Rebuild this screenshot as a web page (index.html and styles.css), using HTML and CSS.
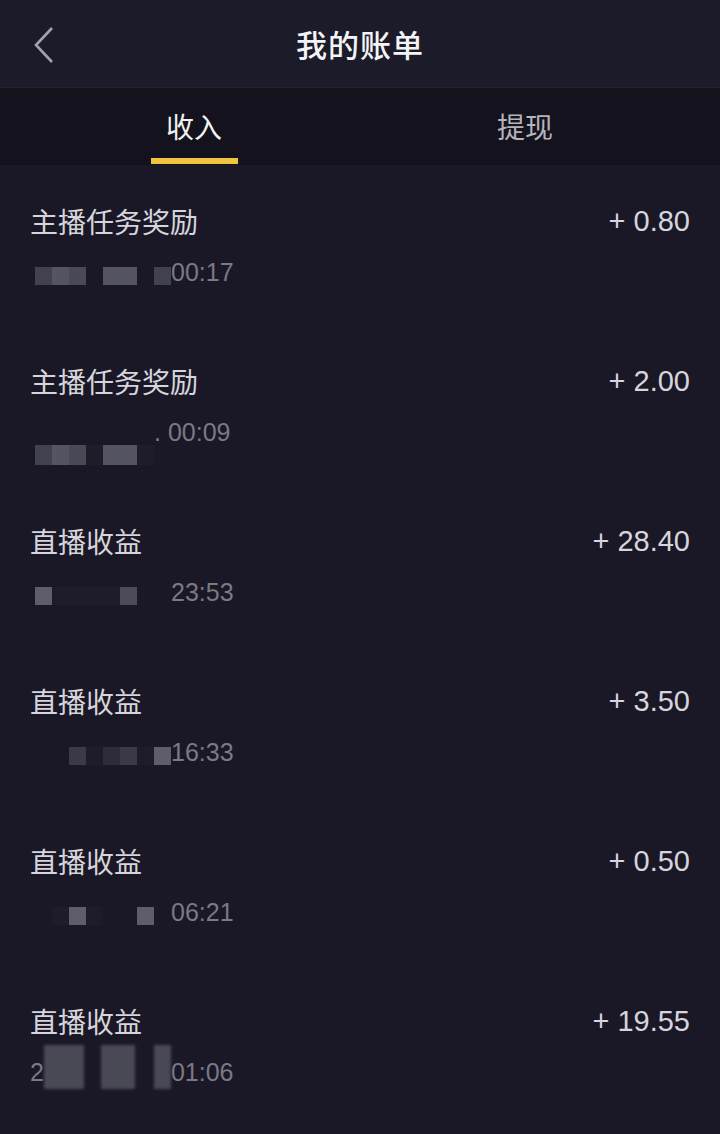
FILE: index.html
```html
<!DOCTYPE html>
<html>
<head>
    <title>我的账单</title>
    <link rel="stylesheet" href="styles.css">
</head>
<body>
    <header class="topbar">
        <a class="back" href="#">
            <svg width="24" height="38" viewBox="0 0 24 38"><path d="M20 2 L4 19 L20 36" fill="none" stroke="#a3a2ac" stroke-width="2.6"/></svg>
        </a>
        <h1>我的账单</h1>
    </header>
    <nav class="tabs">
        <div class="tab active">收入<span class="line"></span></div>
        <div class="tab">提现</div>
    </nav>
    <div class="list">
        <div class="row">
            <div class="info">
                <div class="name">主播任务奖励</div>
                <div class="time"><span class="blur"><i class="b2"></i><i class="b3"></i><i class="b1"></i><i></i><i class="b3"></i><i class="b3"></i><i></i><i class="b2"></i></span>00:17</div>
            </div>
            <div class="amount">+ 0.80</div>
        </div>
        <div class="row">
            <div class="info">
                <div class="name">主播任务奖励</div>
                <div class="time"><span class="blur low"><i class="b2"></i><i class="b3"></i><i class="b1"></i><i class="d"></i><i class="b3"></i><i class="b3"></i><i class="d"></i></span>.&nbsp;00:09</div>
            </div>
            <div class="amount">+ 2.00</div>
        </div>
        <div class="row">
            <div class="info">
                <div class="name">直播收益</div>
                <div class="time"><span class="blur"><i class="sq"></i><i class="d"></i><i class="d"></i><i class="d"></i><i class="d"></i><i class="sq dim"></i><i></i><i></i></span>23:53</div>
            </div>
            <div class="amount">+ 28.40</div>
        </div>
        <div class="row">
            <div class="info">
                <div class="name">直播收益</div>
                <div class="time"><span class="blur"><i></i><i></i><i class="sq dark"></i><i class="d"></i><i class="sq darker"></i><i class="sq dark"></i><i class="d"></i><i class="sq"></i></span>16:33</div>
            </div>
            <div class="amount">+ 3.50</div>
        </div>
        <div class="row">
            <div class="info">
                <div class="name">直播收益</div>
                <div class="time"><span class="blur"><i></i><i class="d"></i><i class="sq"></i><i class="d"></i><i></i><i></i><i class="sq"></i><i></i></span>06:21</div>
            </div>
            <div class="amount">+ 0.50</div>
        </div>
        <div class="row">
            <div class="info">
                <div class="name">直播收益</div>
                <div class="time"><span class="first">2</span><span class="blur tall"><i class="sq w40"></i><i></i><i class="sq w34"></i><i class="w19"></i><i class="sq"></i></span>01:06</div>
            </div>
            <div class="amount">+ 19.55</div>
        </div>
    </div>
</body>
</html>
```

FILE: styles.css
```css
body {
    margin: 0;
    padding: 0;
    background-color: #1a1826;
    font-family: "Noto Sans CJK SC", "Liberation Sans", sans-serif;
    width: 720px;
    height: 1134px;
    overflow: hidden;
}
.topbar {
    height: 88px;
    background-color: #1c1b29;
    position: relative;
    display: flex;
    align-items: center;
    justify-content: center;
    border-bottom: 1px solid #22212f;
    box-sizing: border-box;
}
.back {
    position: absolute;
    left: 32px;
    top: 26px;
}
.topbar h1 {
    margin: 0;
    color: #f4f4f6;
    font-size: 31px;
    font-weight: 500;
    letter-spacing: 1px;
}
.tabs {
    height: 77px;
    background-color: #13121d;
    display: flex;
}
.tab {
    position: relative;
    text-align: center;
    color: #b5b4bc;
    font-size: 28px;
    line-height: 77px;
}
.tab:first-child {
    width: 388px;
}
.tab:last-child {
    width: 274px;
}
.tab.active {
    color: #f2f2f4;
}
.tab .line {
    position: absolute;
    left: 151px;
    bottom: 1px;
    width: 87px;
    height: 6px;
    background-color: #f1c340;
}
.list {
    padding: 0 30px;
}
.row {
    display: flex;
    justify-content: space-between;
    height: 160px;
    padding-top: 37px;
    box-sizing: border-box;
}
.name {
    color: #d6d5dc;
    font-size: 28px;
    line-height: 38px;
}
.amount {
    color: #d6d5dc;
    font-family: "Liberation Sans", sans-serif;
    font-size: 29px;
    line-height: 38px;
}
.time {
    margin-top: 17px;
    color: #7a7984;
    font-family: "Liberation Sans", sans-serif;
    font-size: 25px;
    line-height: 30px;
    display: flex;
    align-items: flex-start;
    height: 30px;
    white-space: nowrap;
}
.blur {
    display: flex;
    height: 30px;
    margin-left: 5px;
    filter: blur(0.7px);
}
.first + .blur {
    margin-left: 0;
}
.blur i {
    display: block;
    width: 17px;
    height: 18px;
    margin-top: 10px;
}
.blur.low i {
    height: 20px;
    margin-top: 28px;
}
.blur.tall {
    filter: blur(1.5px);
}
.blur.tall i {
    height: 44px;
    margin-top: -12px;
}
.blur i.w40 { width: 40px; }
.blur i.w34 { width: 34px; }
.blur i.w19 { width: 19px; }
.blur .b1 { background-color: #4a4956; }
.blur .b2 { background-color: #42414f; }
.blur .b3 { background-color: #555462; }
.blur .d { background-color: #1d1c28; }
.blur .sq { background-color: #5e5d69; }
.blur .sq.dim { background-color: #4c4b58; }
.blur .sq.dark { background-color: #3a3945; }
.blur .sq.darker { background-color: #2c2b37; }
.blur.tall .sq { background-color: #4a4956; }
```
